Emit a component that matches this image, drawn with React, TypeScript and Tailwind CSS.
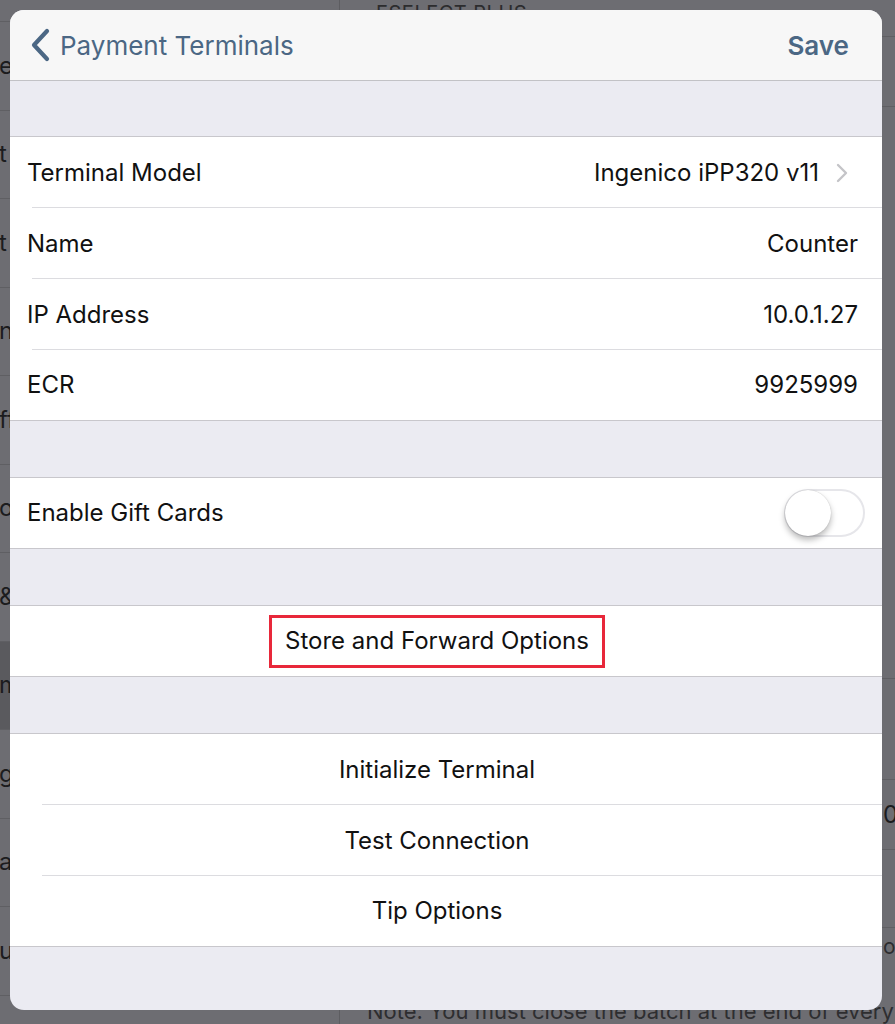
import React from "react";

const font = { fontFamily: "Inter, 'Noto Sans', 'Liberation Sans', sans-serif" };

function BackChevron() {
  return (
    <svg width="20" height="34" viewBox="0 0 20 34" fill="none">
      <path d="M17 3 L4 17 L17 31" stroke="#4b6784" strokeWidth="4.2" strokeLinecap="round" strokeLinejoin="round" />
    </svg>
  );
}

function RowChevron() {
  return (
    <svg width="12" height="20" viewBox="0 0 12 20" fill="none">
      <path d="M2 2 L10 10 L2 18" stroke="#c4c4c8" strokeWidth="2.4" strokeLinecap="round" strokeLinejoin="round" />
    </svg>
  );
}

function Toggle() {
  return (
    <div className="relative w-[81px] h-[48px] rounded-full bg-white border-[2px] border-[#e6e6ea]">
      <div className="absolute left-[-1px] top-[-1px] w-[46px] h-[46px] rounded-full bg-white shadow-[0_4px_6px_rgba(0,0,0,0.28),0_0_1px_rgba(0,0,0,0.25)]" />
    </div>
  );
}

const bgRows = ["er", "t", "t", "n", "ff", "or", "&", "m", "g", "a", "u"];

export default function App() {
  return (
    <div className="relative w-[895px] h-[1024px] overflow-hidden bg-[#6d6d72]" style={font}>
      {/* dimmed background page */}
      <div className="flex h-full">
        <div className="w-[340px] shrink-0 flex flex-col border-r border-[#5d5d61]">
          <div className="h-[22px] shrink-0 border-b border-[#5f5f63]" />
          {bgRows.map((t, i) => (
            <div
              key={i}
              className={`h-[88.5px] shrink-0 flex items-center border-b border-[#5f5f63] ${i === 7 ? "bg-[#5a5a5e]" : ""}`}
            >
              <span className="text-[24px] text-[#1c1c1e] leading-none ml-[-1px]">{t}</span>
            </div>
          ))}
        </div>
        <div className="flex-1 flex flex-col">
          <div className="h-[37px] shrink-0 border-b border-[#5f5f63] pl-[36px] pt-[2px]">
            <span className="text-[20px] leading-none text-[#2c2c2e] tracking-[0.5px]">ESELECT PLUS</span>
          </div>
          <div className="h-[70px] shrink-0 border-b border-[#5f5f63]" />
          <div className="h-[572px] shrink-0 border-b border-[#5f5f63]" />
          <div className="h-[101px] shrink-0 border-b border-[#5f5f63]" />
          <div className="h-[70px] shrink-0 border-b border-[#5f5f63] flex items-center pl-[543px]">
            <span className="text-[24px] leading-none text-[#1c1c1e]">0</span>
          </div>
          <div className="h-[78px] shrink-0 border-b border-[#5f5f63]" />
          <div className="h-[72px] shrink-0 pl-[543px] pt-[8px]">
            <span className="text-[21px] leading-none text-[#2e2e30]">or</span>
          </div>
          <div className="pl-[27px] pt-[0px]">
            <span className="text-[22px] leading-none text-[#2e2e30] whitespace-nowrap">Note: You must close the batch at the end of every day</span>
          </div>
        </div>
      </div>

      {/* modal sheet */}
      <div className="absolute left-[10px] top-[10px] w-[872px] h-[1000px] rounded-[14px] overflow-hidden bg-[#ebebf2] flex flex-col">
        {/* nav bar */}
        <div className="h-[71px] shrink-0 bg-[#f7f7f7] border-b border-[#c2c2c6] flex items-center justify-between pl-[20px] pr-[33px]">
          <div className="flex items-center gap-[10px] text-[#4b6784]">
            <BackChevron />
            <span className="text-[26px]">Payment Terminals</span>
          </div>
          <span className="text-[26px] font-semibold text-[#4b6784]">Save</span>
        </div>

        <div className="h-[55px] shrink-0" />

        {/* terminal group */}
        <div className="bg-white border-y border-[#c8c7cc] text-[24px] text-[#111]">
          <div className="h-[71px] flex items-center justify-between pl-[17px] pr-[34px] relative">
            <span>Terminal Model</span>
            <div className="flex items-center gap-[17px]">
              <span>Ingenico iPP320 v11</span>
              <RowChevron />
            </div>
            <div className="absolute left-[22px] right-0 bottom-0 h-px bg-[#dcdce0]" />
          </div>
          <div className="h-[71px] flex items-center justify-between pl-[17px] pr-[24px] relative">
            <span>Name</span>
            <span>Counter</span>
            <div className="absolute left-[22px] right-0 bottom-0 h-px bg-[#dcdce0]" />
          </div>
          <div className="h-[71px] flex items-center justify-between pl-[17px] pr-[24px] relative">
            <span>IP Address</span>
            <span>10.0.1.27</span>
            <div className="absolute left-[22px] right-0 bottom-0 h-px bg-[#dcdce0]" />
          </div>
          <div className="h-[70px] flex items-center justify-between pl-[17px] pr-[24px]">
            <span>ECR</span>
            <span>9925999</span>
          </div>
        </div>

        <div className="h-[56px] shrink-0" />

        <div className="bg-white border-y border-[#c8c7cc] text-[24px] text-[#111]">
          <div className="h-[70px] flex items-center justify-between pl-[17px] pr-[17px]">
            <span>Enable Gift Cards</span>
            <Toggle />
          </div>
        </div>

        <div className="h-[56px] shrink-0" />

        <div className="bg-white border-y border-[#c8c7cc] text-[24px] text-[#111]">
          <div className="h-[70px] flex items-center justify-center pr-[18px]">
            <span className="border-[3px] border-[#e8283a] px-[13px] pt-[7px] pb-[9px] leading-[31px]">Store and Forward Options</span>
          </div>
        </div>

        <div className="h-[56px] shrink-0" />

        <div className="bg-white border-y border-[#c8c7cc] text-[24px] text-[#111]">
          <div className="h-[71px] flex items-center justify-center pr-[18px] relative">
            <span>Initialize Terminal</span>
            <div className="absolute left-[32px] right-0 bottom-0 h-px bg-[#dcdce0]" />
          </div>
          <div className="h-[71px] flex items-center justify-center pr-[18px] relative">
            <span>Test Connection</span>
            <div className="absolute left-[32px] right-0 bottom-0 h-px bg-[#dcdce0]" />
          </div>
          <div className="h-[70px] flex items-center justify-center pr-[18px]">
            <span>Tip Options</span>
          </div>
        </div>
      </div>
    </div>
  );
}
